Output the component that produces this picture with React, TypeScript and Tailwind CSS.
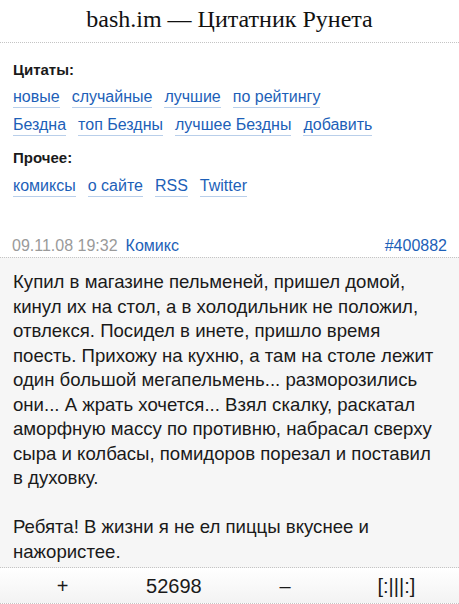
const quoteLinks = [
  ['новые', 'случайные', 'лучшие', 'по рейтингу'],
  ['Бездна', 'топ Бездны', 'лучшее Бездны', 'добавить'],
];
const otherLinks = ['комиксы', 'о сайте', 'RSS', 'Twitter'];

const lines = [
  'Купил в магазине пельменей, пришел домой,',
  'кинул их на стол, а в холодильник не положил,',
  'отвлекся. Посидел в инете, пришло время',
  'поесть. Прихожу на кухню, а там на столе лежит',
  'один большой мегапельмень... разморозились',
  'они... А жрать хочется... Взял скалку, раскатал',
  'аморфную массу по противню, набрасал сверху',
  'сыра и колбасы, помидоров порезал и поставил',
  'в духовку.',
];

function NavLink({ children }: { children: string }) {
  return <a className="text-[#1d5fb8] border-b border-[#b9cfea]">{children}</a>;
}

export default function App() {
  return (
    <div className="w-[459px] h-[604px] overflow-hidden bg-white text-[#1a1a1a] font-['Liberation_Sans',Arial,sans-serif]">
      <header className="h-[43px] flex items-center justify-center border-b border-dotted border-[#c4c4c4]">
        <h1 className="font-['Liberation_Serif','Times_New_Roman',serif] text-[24px] leading-[28px] text-[#111] pb-[4px]">
          bash.im — Цитатник Рунета
        </h1>
      </header>

      <nav className="px-[13px] pt-[17px] h-[193px]">
        <div className="font-bold text-[15px] leading-[20px] mb-[7px]">Цитаты:</div>
        <div className="flex flex-col gap-[7px] text-[16px] leading-[20px]">
          {quoteLinks.map((row, i) => (
            <div key={i} className="flex gap-[12px]">
              {row.map((l) => (
                <NavLink key={l}>{l}</NavLink>
              ))}
            </div>
          ))}
        </div>
        <div className="font-bold text-[15px] leading-[20px] mt-[12px] mb-[8px]">Прочее:</div>
        <div className="flex gap-[12px] text-[16px] leading-[20px]">
          {otherLinks.map((l) => (
            <NavLink key={l}>{l}</NavLink>
          ))}
        </div>
      </nav>

      <div className="flex items-center px-[12px] h-[20px] text-[16px] leading-[20px]">
        <span className="text-[#9a9a9a]">09.11.08 19:32</span>
        <span className="ml-[8px] text-[#1d5fb8] font-medium">Комикс</span>
        <span className="ml-auto text-[#1d5fb8]">#400882</span>
      </div>

      <div className="mt-[1px] border-t border-dotted border-[#c4c4c4] bg-[#f6f6f6] h-[310px] px-[13px] pt-[12px] text-[18.6px] leading-[24.5px] text-[#1a1a1a] whitespace-nowrap">
        <p>
          {lines.map((l, i) => (
            <span key={i}>
              {l}
              <br />
            </span>
          ))}
        </p>
        <p className="mt-[24.5px]">
          Ребята! В жизни я не ел пиццы вкуснее и
          <br />
          нажористее.
        </p>
      </div>

      <footer className="h-[37px] border-t border-b border-dotted border-[#c4c4c4] bg-gradient-to-b from-white to-[#f3f3f3] grid grid-cols-4 px-[7px] items-center text-[20px] text-[#1a1a1a]">
        <span className="text-center">+</span>
        <span className="text-center">52698</span>
        <span className="text-center">–</span>
        <span className="text-center">[:|||:]</span>
      </footer>
    </div>
  );
}
